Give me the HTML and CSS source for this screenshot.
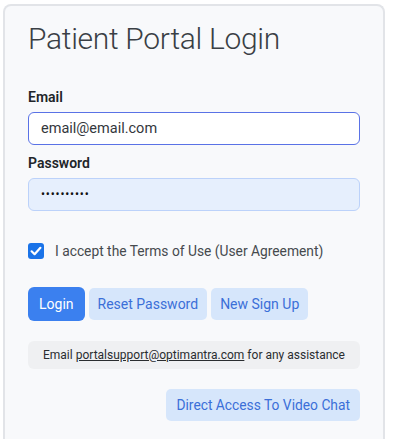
FILE: index.html
```html
<!DOCTYPE html>
<html lang="en">
<head>
<meta charset="utf-8">
<title>Patient Portal Login</title>
<link rel="stylesheet" href="styles.css">
</head>
<body>
<div class="card">
  <h1 class="title">Patient Portal Login</h1>
  <form class="form">
    <label class="label" for="email">Email</label>
    <div class="input input-focus">email@email.com</div>
    <label class="label label-pw" for="pw">Password</label>
    <div class="input input-fill">••••••••••</div>
    <div class="check-row">
      <span class="checkbox">
        <svg viewBox="0 0 16 16" width="16" height="16"><path d="M3.6 8.3 L6.6 11.2 L12.4 4.8" fill="none" stroke="#fff" stroke-width="2.2" stroke-linecap="round" stroke-linejoin="round"/></svg>
      </span>
      <span class="check-text">I accept the Terms of Use (User Agreement)</span>
    </div>
    <div class="btn-row">
      <span class="btn btn-primary">Login</span>
      <span class="btn btn-light">Reset Password</span>
      <span class="btn btn-light">New Sign Up</span>
    </div>
    <div class="info">Email <span class="link">portalsupport@optimantra.com</span> for any assistance</div>
    <div class="video-row">
      <span class="btn btn-light btn-video">Direct Access To Video Chat</span>
    </div>
  </form>
</div>
</body>
</html>
```
FILE: styles.css
```css
* { box-sizing: border-box; }
html, body { margin: 0; padding: 0; background: #ffffff; }
body {
  font-family: Roboto, "Liberation Sans", sans-serif;
  color: #212529;
  padding: 4px 12px 0 3px;
  height: 439px;
  overflow: hidden;
}
.card {
  width: 382px;
  height: 435px;
  background: #f8f9fb;
  border: 2px solid #e2e4e8;
  border-bottom: 0;
  border-radius: 8px 8px 0 0;
  padding: 15px 23px 0 23px;
}
.title {
  margin: 0;
  font-weight: 300;
  font-size: 30px;
  line-height: 36px;
  color: #3a3f45;
  letter-spacing: -0.3px;
}
.form { display: flex; flex-direction: column; margin-top: 32px; }
.label {
  font-size: 14px;
  font-weight: 600;
  line-height: 17px;
  color: #212529;
  margin-bottom: 6px;
}
.label-pw { margin-top: 10px; }
.input {
  height: 33px;
  border-radius: 6px;
  padding: 0 12px;
  font-size: 14.5px;
  line-height: 31px;
  color: #33373c;
}
.input-focus { background: #fff; border: 1px solid #5a72e6; }
.input-fill { background: #e6effd; border: 1px solid #bcd2fa; color: #111; font-size: 12px; letter-spacing: 0.8px; }
.check-row {
  display: flex;
  align-items: center;
  gap: 11px;
  margin-top: 32px;
  height: 16px;
}
.checkbox {
  width: 16px; height: 16px;
  background: #1a73e8;
  border-radius: 3px;
  display: flex;
}
.check-text { font-size: 13.8px; color: #464a4e; }
.btn-row { display: flex; gap: 4px; margin-top: 28px; }
.btn {
  display: inline-flex;
  align-items: center;
  height: 34px;
  padding: 0 11px;
  border-radius: 6px;
  font-size: 14px;
}
.btn-primary { background: #3b80ef; color: #fff; }
.btn-light { background: #d6e6fb; color: #3b6fd8; height: 32px; margin-top: 1px; border-radius: 5px; padding: 0 9px; }
.info {
  margin-top: 20px;
  height: 28px;
  border-radius: 6px;
  background: #eff0f2;
  font-size: 12px;
  line-height: 28px;
  text-align: center;
  color: #2a2d30;
}
.link { text-decoration: underline; }
.video-row { display: flex; justify-content: flex-end; margin-top: 20px; }
.btn-video { height: 32px; padding: 0 10px; margin-top: 0; font-size: 13.8px; }
```
